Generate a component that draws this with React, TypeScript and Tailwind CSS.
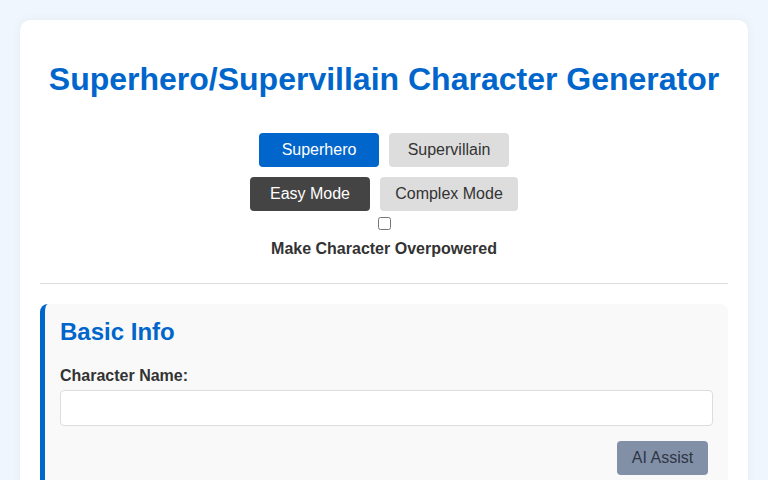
import React from "react";

export default function App() {
  return (
    <div className="min-h-screen bg-[#f0f6fe] p-5 font-['Liberation_Sans',Arial,sans-serif] text-[#333]">
      <div className="bg-white rounded-[10px] shadow-[0_0_10px_rgba(0,0,0,0.05)] p-5">
        <h1 className="text-center text-[32px] leading-[37px] font-bold text-[#0066cc] mt-[21px] mb-[21px]">
          Superhero/Supervillain Character Generator
        </h1>
        <div className="flex flex-col items-center">
          <div className="flex justify-center gap-[10px] mt-[14px]">
            <button className="w-[120px] h-[34px] rounded-[4px] bg-[#0066cc] text-white text-[16px]">Superhero</button>
            <button className="w-[120px] h-[34px] rounded-[4px] bg-[#dddddd] text-[#333] text-[16px]">Supervillain</button>
          </div>
          <div className="flex justify-center gap-[10px] mt-[10px]">
            <button className="w-[120px] h-[34px] rounded-[4px] bg-[#444444] text-white text-[16px]">Easy Mode</button>
            <button className="w-[138px] h-[34px] rounded-[4px] bg-[#dddddd] text-[#333] text-[16px]">Complex Mode</button>
          </div>
          <input type="checkbox" className="w-[13px] h-[13px] mt-[6px]" />
          <label className="font-bold text-[16px] leading-[18px] mt-[10px]">Make Character Overpowered</label>
        </div>
        <div className="h-px bg-[#dddddd] mt-[25px] mb-[20px]" />
        <div className="bg-[#f9f9f9] rounded-[8px] border-l-[5px] border-[#0066cc] px-[15px] pt-[14px] pb-[20px]">
          <h2 className="text-[24px] leading-[28px] font-bold text-[#0066cc]">Basic Info</h2>
          <label className="block font-bold text-[16px] leading-[18px] mt-[21px]">Character Name:</label>
          <input type="text" className="block w-full h-[36px] mt-[5px] bg-white border border-[#dddddd] rounded-[4px] px-2" />
          <div className="flex justify-end mt-[15px] pr-[5px]">
            <button className="w-[91px] h-[34px] rounded-[4px] bg-[#8290a7] text-[#2e3646] text-[16px]">AI Assist</button>
          </div>
        </div>
      </div>
    </div>
  );
}
